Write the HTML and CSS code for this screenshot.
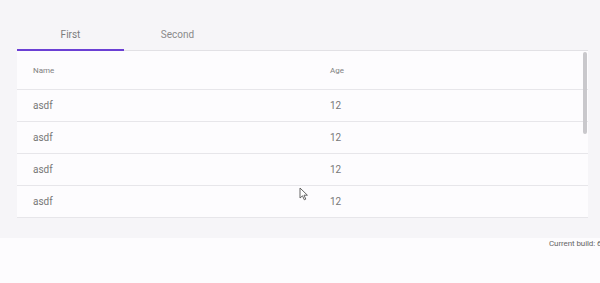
FILE: index.html
```html
<!DOCTYPE html>
<html lang="en">
<head>
    <meta charset="UTF-8">
    <meta name="viewport" content="width=device-width, initial-scale=1.0">
    <title>Tabs table</title>
    <link rel="stylesheet" href="styles.css">
</head>
<body>
    <div class="main">
        <div class="tabs">
            <div class="tab active">First</div>
            <div class="tab">Second</div>
        </div>

        <div class="table">
            <div class="row head">
                <div class="cell name">Name</div>
                <div class="cell">Age</div>
            </div>
            <div class="row">
                <div class="cell name">asdf</div>
                <div class="cell">12</div>
            </div>
            <div class="row">
                <div class="cell name">asdf</div>
                <div class="cell">12</div>
            </div>
            <div class="row">
                <div class="cell name">asdf</div>
                <div class="cell">12</div>
            </div>
            <div class="row">
                <div class="cell name">asdf</div>
                <div class="cell">12</div>
            </div>
            <div class="scrollbar"></div>
            <svg class="cursor" width="10" height="14" viewBox="0 0 10 14">
                <path d="M1 1 L1 11 L3.5 8.8 L5.3 12.8 L6.8 12.1 L5 8.2 L8.4 8.2 Z" fill="#fff" stroke="#555" stroke-width="0.9" stroke-linejoin="round"/>
            </svg>
        </div>
    </div>

    <div class="footer">Current build: 6.4</div>
</body>
</html>
```

FILE: styles.css
```css
body {
    font-family: Roboto, "Liberation Sans", sans-serif;
    background-color: #fdfcfe;
    margin: 0;
    padding: 0;
    overflow: hidden;
}

.main {
    background-color: #f6f5f8;
    height: 238px;
    box-sizing: border-box;
    padding: 22px 12px 0 17px;
}

.tabs {
    display: flex;
    border-bottom: 1px solid #e2e1e5;
}

.tab {
    width: 107px;
    height: 29px;
    line-height: 26px;
    text-align: center;
    font-size: 10px;
    color: #8a8a8a;
    box-sizing: border-box;
    border-bottom: 2px solid transparent;
    margin-bottom: -1px;
}

.tab.active {
    color: #7c7c7c;
    border-bottom-color: #6b3fd4;
}

.table {
    position: relative;
    background-color: #fdfcfe;
}

.row {
    display: flex;
    height: 32px;
    box-sizing: border-box;
    align-items: center;
    border-bottom: 1px solid #e7e6ea;
    font-size: 10px;
    color: #777;
}

.row.head {
    height: 39px;
    font-size: 8px;
    color: #808080;
}

.cell {
    padding-left: 16px;
}

.cell.name {
    width: 281px;
}

.scrollbar {
    position: absolute;
    top: 1px;
    right: 1px;
    width: 4px;
    height: 82px;
    border-radius: 2px;
    background-color: #c9c8cc;
}

.cursor {
    position: absolute;
    left: 282px;
    top: 136px;
}

.footer {
    padding: 1px 0 0 549px;
    white-space: nowrap;
    font-size: 8px;
    letter-spacing: -0.1px;
    color: #666;
}
```
